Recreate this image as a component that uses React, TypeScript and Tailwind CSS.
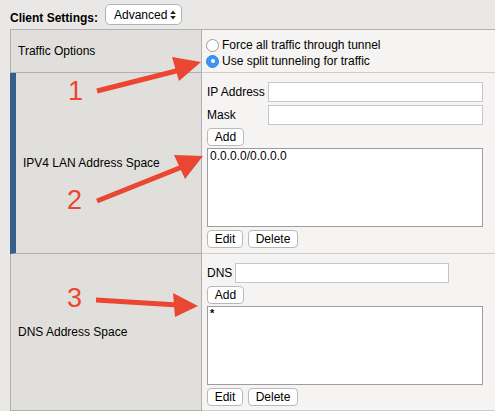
import React from 'react';

const font = { fontFamily: '"Liberation Sans", Arial, sans-serif' };

const Btn: React.FC<{ label: string; w: string }> = ({ label, w }) => (
  <button
    className={`${w} h-[18px] bg-white border border-[#b9b9b9] rounded-[4px] text-[12px] leading-none text-black flex items-center justify-center`}
  >
    {label}
  </button>
);

const Radio: React.FC<{ checked?: boolean; label: string }> = ({ checked, label }) => (
  <label className="flex items-center h-[16px] text-[12px] text-black whitespace-nowrap">
    {checked ? (
      <span className="w-[13px] h-[13px] rounded-full bg-[#3b94f7] border border-[#2f86ea] flex items-center justify-center mr-[3px]">
        <span className="w-[4px] h-[4px] rounded-full bg-white" />
      </span>
    ) : (
      <span className="w-[13px] h-[13px] rounded-full bg-white border border-[#9c9c9c] mr-[3px]" />
    )}
    {label}
  </label>
);

const Field = () => <div className="h-[20px] bg-white border border-[#c6c6c6]" />;

export default function App() {
  return (
    <div className="relative w-[495px] h-[411px] overflow-hidden bg-[#e9e8e6]" style={font}>
      {/* header */}
      <div className="h-[29px] flex items-start pl-[10px]">
        <span className="mt-[11px] text-[12px] font-bold text-black leading-[14px]">Client Settings:</span>
        <div className="ml-[7px] mt-[4px] w-[77px] h-[21px] bg-white border border-[#b4b4b4] rounded-[5px] flex items-center justify-between pl-[8px] pr-[5px] text-[12px] text-black whitespace-nowrap">
          <span>Advanced</span>
          <svg width="6" height="10" viewBox="0 0 6 10" className="shrink-0">
            <path d="M3 0.5 L5.8 4 L0.2 4 Z" fill="#222" />
            <path d="M3 9.5 L5.8 6 L0.2 6 Z" fill="#222" />
          </svg>
        </div>
      </div>

      {/* settings table */}
      <div className="ml-[10px] border-t border-[#b0b0b0] grid grid-cols-[192px_1fr] text-[12px] text-black">
        {/* row 1 */}
        <div className="h-[43px] border-l border-r border-b border-[#b0b0b0] bg-[#e0dfdc] flex items-center pl-[7px]">
          Traffic Options
        </div>
        <div className="h-[43px] border-b border-[#cfcecb] bg-[#f5f4f2] pl-[4px] pt-[7px] flex flex-col">
          <Radio label="Force all traffic through tunnel" />
          <Radio checked label="Use split tunneling for traffic" />
        </div>

        {/* row 2 */}
        <div className="h-[181px] border-l-[6px] border-l-[#365f8c] border-r border-b border-r-[#b0b0b0] border-b-[#b0b0b0] bg-[#e0dfdc] flex items-center pl-[7px]">
          IPV4 LAN Address Space
        </div>
        <div className="h-[181px] border-b border-[#cfcecb] bg-[#f5f4f2] pl-[5px] pt-[9px] flex flex-col">
          <div className="grid grid-cols-[61px_215px] gap-y-[3px] items-center">
            <span className="whitespace-nowrap">IP Address</span>
            <Field />
            <span>Mask</span>
            <Field />
          </div>
          <div className="mt-[3px]">
            <Btn label="Add" w="w-[37px]" />
          </div>
          <div className="mt-[2px] w-[276px] h-[79px] bg-white border border-[#9d9d9d] pl-[2px] leading-[15px]">
            0.0.0.0/0.0.0.0
          </div>
          <div className="mt-[3px] flex gap-[5px]">
            <Btn label="Edit" w="w-[36px]" />
            <Btn label="Delete" w="w-[50px]" />
          </div>
        </div>

        {/* row 3 */}
        <div className="h-[157px] border-l border-r border-b border-[#b0b0b0] bg-[#e0dfdc] flex items-center pl-[7px]">
          DNS Address Space
        </div>
        <div className="h-[157px] border-b border-[#cfcecb] bg-[#f5f4f2] pl-[5px] pt-[9px] flex flex-col">
          <div className="flex items-center">
            <span className="w-[28px]">DNS</span>
            <div className="w-[214px]">
              <Field />
            </div>
          </div>
          <div className="mt-[3px]">
            <Btn label="Add" w="w-[37px]" />
          </div>
          <div className="mt-[2px] w-[276px] h-[79px] bg-white border border-[#9d9d9d] pl-[2px] leading-[12px] text-[11px] font-bold">
            *
          </div>
          <div className="mt-[3px] flex gap-[5px]">
            <Btn label="Edit" w="w-[36px]" />
            <Btn label="Delete" w="w-[50px]" />
          </div>
        </div>
      </div>

      {/* annotation arrows */}
      <svg className="absolute inset-0 pointer-events-none" width="495" height="411" viewBox="0 0 495 411">
        <g fill="#eb4632" stroke="none">
          <line x1="97" y1="91" x2="180" y2="70" stroke="#eb4632" strokeWidth="5" />
          <polygon points="172,57 201,62 179,81" />
          <line x1="97" y1="201" x2="182" y2="167" stroke="#eb4632" strokeWidth="5" />
          <polygon points="174,155 203,156 185,179" />
          <line x1="96" y1="300" x2="178" y2="305" stroke="#eb4632" strokeWidth="5" />
          <polygon points="173,293 198,306 175,317" />
          <text x="68" y="100" fontSize="27" fontFamily="Liberation Sans, Arial, sans-serif">1</text>
          <text x="67" y="209" fontSize="27" fontFamily="Liberation Sans, Arial, sans-serif">2</text>
          <text x="67" y="307" fontSize="27" fontFamily="Liberation Sans, Arial, sans-serif">3</text>
        </g>
      </svg>
    </div>
  );
}
